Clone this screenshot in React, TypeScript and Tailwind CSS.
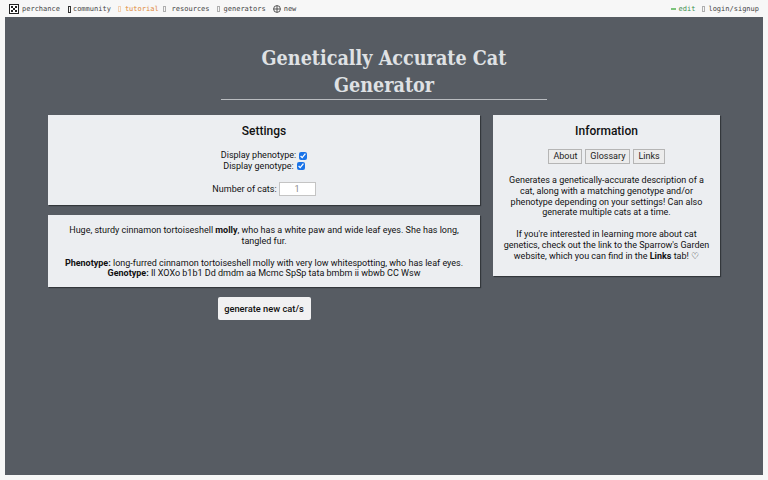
import React from "react";

function NavGlyph({ className = "" }: { className?: string }) {
  return <span className={`inline-block w-[3px] h-[6px] border border-current opacity-40 ${className}`} />;
}

function Panel({ className = "", children }: { className?: string; children: React.ReactNode }) {
  return (
    <div className={`bg-[#eceef1] text-[#111] text-center text-[9px] leading-[10.8px] shadow-[1px_1px_1px_#33373b] ${className}`}>
      {children}
    </div>
  );
}

function TabButton({ label }: { label: string }) {
  return (
    <button className="h-[15px] px-[4px] bg-[#ececec] border border-[#b5b5b5] text-[9px] leading-[13px] text-[#222]">
      {label}
    </button>
  );
}

export default function App() {
  return (
    <div className="w-[768px] h-[480px] overflow-hidden bg-[#f7f7f7] flex flex-col font-['Roboto',sans-serif]">
      <header className="h-[17px] shrink-0 flex justify-between items-center pl-[9px] pr-[9px] pt-[1px] font-['DejaVu_Sans_Mono','Liberation_Mono',monospace] text-[7px] text-[#444]">
        <nav className="flex items-center">
          <svg width="10" height="10" viewBox="0 0 10 10" className="mr-[3px]">
            <rect x="0.5" y="0.5" width="9" height="9" fill="#fff" stroke="#222" />
            <rect x="2" y="2" width="2" height="2" fill="#222" />
            <rect x="6" y="2" width="2" height="2" fill="#222" />
            <rect x="4" y="4" width="2" height="2" fill="#222" />
            <rect x="2" y="6" width="2" height="2" fill="#222" />
            <rect x="6" y="6" width="2" height="2" fill="#222" />
          </svg>
          <span>perchance</span>
          <span className="ml-[8px] inline-block w-[3px] h-[7px] border border-[#333] mr-[2px]" />
          <span>community</span>
          <NavGlyph className="ml-[7px] mr-[4px] text-[#e8994f]" />
          <span className="text-[#e08a3c]">tutorial</span>
          <NavGlyph className="ml-[4px] mr-[6px]" />
          <span>resources</span>
          <NavGlyph className="ml-[7px] mr-[4px]" />
          <span>generators</span>
          <svg width="8" height="8" viewBox="0 0 8 8" className="ml-[7px] mr-[3px]" fill="none" stroke="#333" strokeWidth="0.8">
            <circle cx="4" cy="4" r="3.4" />
            <path d="M0.6 4h6.8M4 0.6v6.8" />
          </svg>
          <span>new</span>
        </nav>
        <nav className="flex items-center">
          <span className="inline-block w-[5px] h-[2px] bg-[#7cc47c] mr-[3px]" />
          <span className="text-[#3f8f4f]">edit</span>
          <NavGlyph className="ml-[7px] mr-[3px]" />
          <span>login/signup</span>
        </nav>
      </header>

      <main className="mx-[5px] w-[758px] h-[458px] bg-[#575c63] flex flex-col items-center">
        <div className="mt-[28px] w-[326px] border-b border-[#b9bcc0] text-center text-[#dfe1e4] font-['DejaVu_Serif_Condensed','DejaVu_Serif',serif] font-bold text-[19.6px] leading-[27px]">
          Genetically Accurate Cat Generator
        </div>

        <div className="mt-[15px] w-[672px] flex gap-[13px] items-start">
          <div className="w-[432px] flex flex-col items-center">
            <Panel className="w-full h-[90px] pt-[9px]">
              <div className="text-[12px] leading-[14px] font-medium">Settings</div>
              <div className="mt-[12px] flex justify-center items-center gap-[3px] h-[11px]">
                Display phenotype:
                <input type="checkbox" defaultChecked className="w-[8px] h-[8px] accent-[#1a73e8]" />
              </div>
              <div className="flex justify-center items-center gap-[3px] h-[10px]">
                Display genotype:
                <input type="checkbox" defaultChecked className="w-[8px] h-[8px] accent-[#1a73e8]" />
              </div>
              <div className="mt-[11px] flex justify-center items-center gap-[2px]">
                Number of cats:
                <input
                  defaultValue="1"
                  className="w-[37px] h-[14px] bg-white border border-[#c4c4c4] text-center text-[9px] text-[#8a8a8a]"
                />
              </div>
            </Panel>

            <Panel className="w-full mt-[10px] h-[72px] pt-[10px] px-[14px]">
              <p>
                Huge, sturdy cinnamon tortoiseshell <b>molly</b>, who has a white paw and wide leaf eyes. She has long, tangled fur.
              </p>
              <p className="mt-[11px]">
                <b>Phenotype:</b> long-furred cinnamon tortoiseshell molly with very low whitespotting, who has leaf eyes.
              </p>
              <p>
                <b>Genotype:</b> Il XOXo b1b1 Dd dmdm aa Mcmc SpSp tata bmbm ii wbwb CC Wsw
              </p>
            </Panel>

            <button className="mt-[10px] w-[93px] h-[23px] bg-[#f1f1f2] rounded-[2px] text-[9.3px] font-medium text-[#111]">
              generate new cat/s
            </button>
          </div>

          <Panel className="w-[227px] h-[161px] pt-[9px] px-[8px]">
            <div className="text-[12px] leading-[14px] font-medium">Information</div>
            <div className="mt-[11px] flex justify-center gap-[3px]">
              <TabButton label="About" />
              <TabButton label="Glossary" />
              <TabButton label="Links" />
            </div>
            <p className="mt-[11px]">
              Generates a genetically-accurate description of a cat, along with a matching genotype and/or phenotype depending on your settings! Can also generate multiple cats at a time.
            </p>
            <p className="mt-[11px]">
              If you're interested in learning more about cat genetics, check out the link to the Sparrow's Garden website, which you can find in the <b>Links</b> tab! ♡
            </p>
          </Panel>
        </div>
      </main>
    </div>
  );
}
